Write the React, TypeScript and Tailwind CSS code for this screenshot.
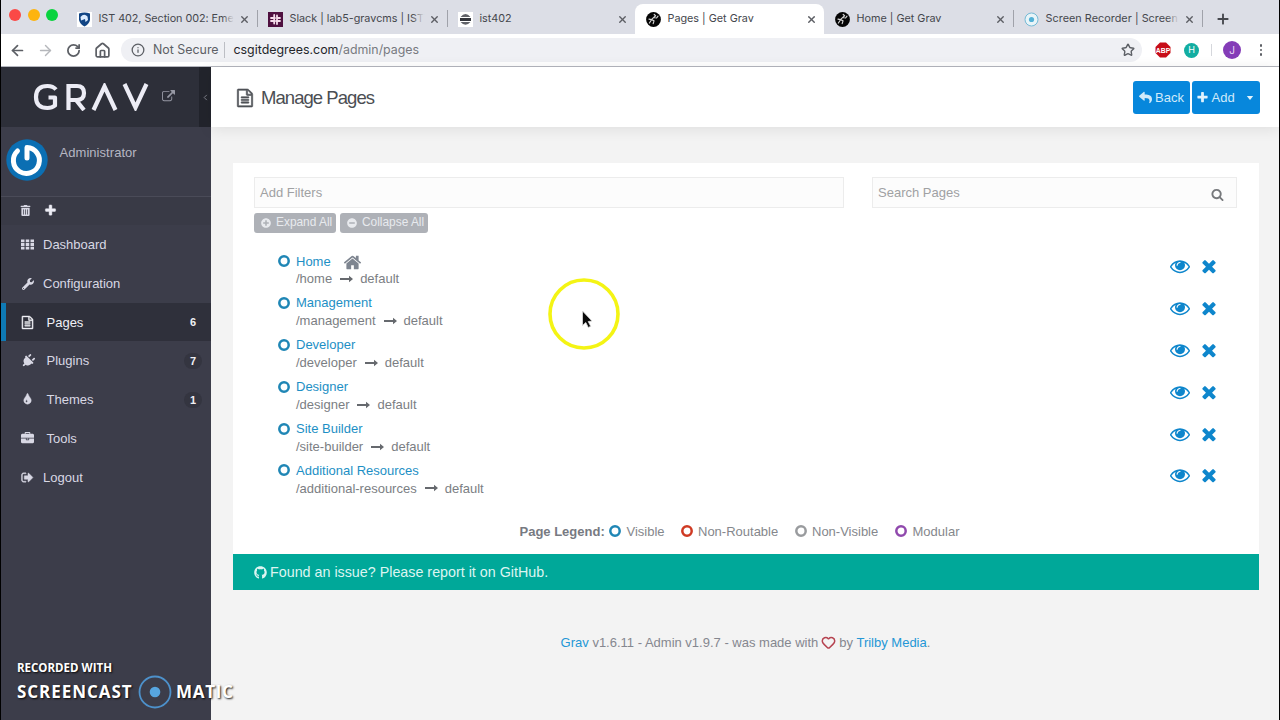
import type { ReactNode } from "react";
import { FaGithub, FaMinusCircle, FaPlug, FaPlusCircle, FaReply, FaTrashAlt, FaWrench } from "react-icons/fa";
import { ArrowLeft, ArrowRight, Heart, House, Info, Plus, RotateCw, Star, X } from "lucide-react";

const paths = {
  eye: "M1664 960q-152-236-381-353 61 104 61 225 0 185-131.5 316.5t-316.5 131.5-316.5-131.5-131.5-316.5q0-121 61-225-229 117-381 353 133 205 333.5 326.5t434.5 121.5 434.5-121.5 333.5-326.5zm-720-384q0-20-14-34t-34-14q-125 0-214.5 89.5t-89.5 214.5q0 20 14 34t34 14 34-14 14-34q0-86 61-147t147-61q20 0 34-14t14-34zm848 384q0 34-20 69-140 230-376.5 368.5t-499.5 138.5-499.5-139-376.5-368q-20-35-20-69t20-69q140-229 376.5-368t499.5-139 499.5 139 376.5 368q20 35 20 69z",
  times: "M1490 1322q0 40-28 68l-136 136q-28 28-68 28t-68-28l-294-294-294 294q-28 28-68 28t-68-28l-136-136q-28-28-28-68t28-68l294-294-294-294q-28-28-28-68t28-68l136-136q28-28 68-28t68 28l294 294 294-294q28-28 68-28t68 28l136 136q28 28 28 68t-28 68l-294 294 294 294q28 28 28 68z",
  plus: "M1600 736v192q0 40-28 68t-68 28h-416v416q0 40-28 68t-68 28h-192q-40 0-68-28t-28-68v-416h-416q-40 0-68-28t-28-68v-192q0-40 28-68t68-28h416v-416q0-40 28-68t68-28h192q40 0 68 28t28 68v416h416q40 0 68 28t28 68z",
  search: "M1216 832q0-185-131.5-316.5t-316.5-131.5-316.5 131.5-131.5 316.5 131.5 316.5 316.5 131.5 316.5-131.5 131.5-316.5zm512 832q0 52-38 90t-90 38q-54 0-90-38l-343-342q-179 124-399 124-143 0-273.5-55.5t-225-150-150-225-55.5-273.5 55.5-273.5 150-225 225-150 273.5-55.5 273.5 55.5 225 150 150 225 55.5 273.5q0 220-124 399l343 343q37 37 37 90z",
  home: "M1472 992v480q0 26-19 45t-45 19h-384v-384h-256v384h-384q-26 0-45-19t-19-45v-480q0-1 .5-3t.5-3l575-474 575 474q1 2 1 6zm223-69l-62 74q-8 9-21 11h-3q-13 0-21-7l-692-577-692 577q-12 8-24 7-13-2-21-11l-62-74q-8-10-7-23.5t11-21.5l719-599q32-26 76-26t76 26l244 204v-195q0-14 9-23t23-9h192q14 0 23 9t9 23v408l219 182q10 8 11 21.5t-7 23.5z",
  file: "M1596 380q28 28 48 76t20 88v1152q0 40-28 68t-68 28h-1344q-40 0-68-28t-28-68v-1600q0-40 28-68t68-28h896q40 0 88 20t76 48zm-444-244v376h376q-10-29-22-41l-313-313q-12-12-41-22zm384 1528v-1024h-416q-40 0-68-28t-28-68v-416h-768v1536h1280zm-1024-864q0-14 9-23t23-9h704q14 0 23 9t9 23v64q0 14-9 23t-23 9h-704q-14 0-23-9t-9-23v-64zm736 224q14 0 23 9t9 23v64q0 14-9 23t-23 9h-704q-14 0-23-9t-9-23v-64q0-14 9-23t23-9h704zm0 256q14 0 23 9t9 23v64q0 14-9 23t-23 9h-704q-14 0-23-9t-9-23v-64q0-14 9-23t23-9h704z",
  signOut: "M704 1440q0 4 1 20t.5 26.5-3 23.5-10 19.5-20.5 6.5h-320q-119 0-203.5-84.5t-84.5-203.5v-704q0-119 84.5-203.5t203.5-84.5h320q13 0 22.5 9.5t9.5 22.5q0 4 1 20t.5 26.5-3 23.5-10 19.5-20.5 6.5h-320q-66 0-113 47t-47 113v704q0 66 47 113t113 47h312l11.5 1 11.5 3 8 5.5 7 9 2 13.5zm928-544q0 26-19 45l-544 544q-19 19-45 19t-45-19-19-45v-288h-448q-26 0-45-19t-19-45v-384q0-26 19-45t45-19h448v-288q0-26 19-45t45-19 45 19l544 544q19 19 19 45z",
  external: "M1408 928v320q0 119-84.5 203.5t-203.5 84.5h-832q-119 0-203.5-84.5t-84.5-203.5v-832q0-119 84.5-203.5t203.5-84.5h704q14 0 23 9t9 23v64q0 14-9 23t-23 9h-704q-66 0-113 47t-47 113v832q0 66 47 113t113 47h832q66 0 113-47t47-113v-320q0-14 9-23t23-9h64q14 0 23 9t9 23zm384-864v512q0 26-19 45t-45 19-45-19l-176-176-652 652q-10 10-23 10t-23-10l-114-114q-10-10-10-23t10-23l652-652-176-176q-19-19-19-45t19-45 45-19h512q26 0 45 19t19 45z",
  grid: "M0 192h480v384h-480zM656 192h480v384h-480zM1312 192h480v384h-480zM0 704h480v384h-480zM656 704h480v384h-480zM1312 704h480v384h-480zM0 1216h480v384h-480zM656 1216h480v384h-480zM1312 1216h480v384h-480z",
  briefcase: "M640 256h512v-128h-512v128zm1152 640v480q0 66-47 113t-113 47h-1472q-66 0-113-47t-47-113v-480h672v160q0 26 19 45t45 19h320q26 0 45-19t19-45v-160h672zm-768 0v128h-256v-128h256zm768-480v384h-1792v-384q0-66 47-113t113-47h352v-160q0-40 28-68t68-28h576q40 0 68 28t28 68v160h352q66 0 113 47t47 113z",
  tint: "M896 1152q0-36-20-69-1-1-15.500-22.500t-25.500-38-25-44-21-50.500q-4-16-21-16t-21 16q-7 23-21 50.500t-25 44-25.500 38-15.500 22.500q-20 33-20 69 0 53 37.500 90.500t90.500 37.500 90.500-37.500 37.500-90.500zm512-128q0 212-150 362t-362 150-362-150-150-362q0-145 81-275 6-9 62.500-90.500t101-151 99.500-178 83-201.500q9-30 34-47t51-17 51.500 17 33.500 47q28 93 83 201.500t99.500 178 101 151 62.500 90.500q81 127 81 275z",
};

function Glyph({ name, size, className = "", bold }: { name: keyof typeof paths; size: number; className?: string; bold?: boolean }) {
  return (
    <svg viewBox="0 0 1792 1792" width={size} height={size} fill="currentColor" stroke="currentColor" strokeWidth={bold ? 60 : 0} className={`shrink-0 overflow-visible ${className}`}>
      <path d={paths[name]} />
    </svg>
  );
}

function Rocket() {
  return (
    <svg viewBox="0 0 15 15" className="size-[15px] shrink-0">
      <circle cx="7.500" cy="7.500" r="7.400" fill="#050505" />
      <path d="M8.200 2.500L9.600 3.800L7.800 5.400L10.600 6L12 4.200M7.800 5.400L5.400 7.600L3 7.200M5.600 7.600L8 8.800L7.200 11.600M5.400 8L3.400 11" fill="none" stroke="#d4d4d4" strokeWidth="1.200" strokeLinecap="round" strokeLinejoin="round" />
    </svg>
  );
}

function Tab({ icon, title, active, fade, line, className }: { icon: ReactNode; title: string; active?: boolean; fade?: boolean; line?: boolean; className: string }) {
  return (
    <div className={`relative flex h-[30px] shrink-0 items-center pl-[11px] pr-[7.500px] ${active ? "rounded-t-lg bg-white" : ""} ${className}`}>
      {icon}
      <span className="relative ml-[6.500px] mt-px min-w-0 flex-1 whitespace-nowrap text-[#45474d]">
        {title}
        {fade && <span className="absolute inset-y-0 right-0 w-3 bg-linear-to-r from-[#dcdee6]/0 to-[#dcdee6]" />}
      </span>
      <X size={11} strokeWidth={3} className="ml-[5px] mt-px shrink-0 text-[#5c5e64]" />
      {line && <span className="absolute right-[-1px] top-[6px] h-[17px] w-px bg-[#a0a2aa]" />}
    </div>
  );
}

function TabBar() {
  return (
    <div className="flex h-[34px] shrink-0 bg-[#dcdee6] pt-1 font-[Inter,sans-serif] text-[10.800px]">
      <div className="flex w-[65px] shrink-0 gap-[6.500px] pl-2 pt-[5px]">
        <span className="size-3 rounded-full bg-[#fb4946]" />
        <span className="size-3 rounded-full bg-[#fdb40f]" />
        <span className="size-3 rounded-full bg-[#0ad33f]" />
      </div>
      <Tab className="w-[191px] tracking-[-0.050px]" fade line title="IST 402, Section 002: Eme" icon={
        <svg viewBox="0 0 15 15" className="size-[15px] shrink-0">
          <rect width="15" height="15" fill="#fff" />
          <path d="M2 1.500Q7.500-.5 13 1.500V8Q12 12 7.500 14.500Q3 12 2 8Z" fill="#124585" />
          <path d="M3.500 5Q7 1 10.500 4.500L11 8L8.500 10L8 7L4 8.500Z" fill="#dcecff" />
        </svg>
      } />
      <Tab className="w-[190px]" fade line title="Slack | lab5-gravcms | IST" icon={
        <svg viewBox="0 0 15 15" className="size-[15px] shrink-0">
          <rect width="15" height="15" fill="#4f1040" />
          <path d="M6.200 3v2.500M6.200 7.500v4M9 3.500v4M9 9.500v2.500M3 6h4M9 6h3M3 9h3M8 9h4" stroke="#f4dcea" strokeWidth="1.800" strokeLinecap="round" />
        </svg>
      } />
      <Tab className="w-[188px]" title="ist402" icon={
        <svg viewBox="0 0 15 15" className="size-[15px] shrink-0">
          <rect width="15" height="15" fill="#fff" />
          <path d="M2.500 5Q7.500-1 12.500 5ZM2.500 10Q7.500 15.500 12.500 10Z" fill="#606268" />
          <path d="M2 6h11v3h-11z" fill="#33353b" />
        </svg>
      } />
      <Tab className="w-[189px]" active title="Pages | Get Grav" icon={<Rocket />} />
      <Tab className="w-[189px]" line title="Home | Get Grav" icon={<Rocket />} />
      <Tab className="w-[189px] tracking-[0.050px]" fade line title="Screen Recorder | Screen" icon={
        <svg viewBox="0 0 15 15" className="size-[15px] shrink-0">
          <circle cx="7.500" cy="7.500" r="6.500" fill="#e8f4f8" stroke="#75bad6" />
          <circle cx="7.500" cy="7.500" r="2.600" fill="#53b1d6" />
        </svg>
      } />
      <Plus size={16} strokeWidth={2.800} className="ml-[13px] mt-[7px] text-[#45474d]" />
    </div>
  );
}

function Toolbar() {
  return (
    <div className="flex h-[33px] shrink-0 items-center border-b border-[#b4b6be] bg-white font-[Inter,sans-serif] text-[13px] text-[#5c5f65]">
      <ArrowLeft size={17} strokeWidth={2.400} className="ml-[8px]" />
      <ArrowRight size={17} strokeWidth={2} className="ml-[11px] text-[#b5b7bb]" />
      <RotateCw size={15} strokeWidth={2.800} className="ml-[12px]" />
      <House size={17} strokeWidth={2.400} className="ml-[12.500px]" />
      <div className="ml-[10.500px] flex h-6 w-[1021px] items-center rounded-full bg-[#eff0f4] pl-[10px] pr-[7px]">
        <Info size={14} strokeWidth={2.200} />
        <span className="ml-2 w-[66px] whitespace-nowrap text-[12.400px]">Not Secure</span>
        <span className="ml-[5px] mr-[8.500px] h-4 w-px bg-[#bcbec4]" />
        <span className="text-[12.400px] text-[#777a80]"><span className="text-[#232529]">csgitdegrees.com</span>/admin/pages</span>
        <Star size={14} strokeWidth={2.400} className="ml-auto" />
      </div>
      <svg viewBox="0 0 16 16" className="ml-[13px] size-4">
        <path d="M5 .5h6L15.500 5v6L11 15.500H5L.5 11V5Z" fill="#c70d18" />
        <text x="8" y="10.800" textAnchor="middle" fill="#fff" fontFamily="Liberation Sans, sans-serif" fontWeight="bold" fontSize="6.800">ABP</text>
      </svg>
      <span className="ml-[13px] flex size-[15px] items-center justify-center rounded-full bg-[#12ada1] text-[9px] text-white">H</span>
      <span className="ml-3 h-3 w-px bg-[#d5d7dc]" />
      <span className="ml-[11px] flex size-[18px] items-center justify-center rounded-full bg-[#843cb7] text-[10px] text-[#ead9f5]">J</span>
      <span className="ml-[18.500px] flex flex-col gap-[2px]">
        <span className="size-[2.500px] rounded-full bg-[#5c5f65]" />
        <span className="size-[2.500px] rounded-full bg-[#5c5f65]" />
        <span className="size-[2.500px] rounded-full bg-[#5c5f65]" />
      </span>
    </div>
  );
}

function NavItem({ icon, label, count, active, tight }: { icon: ReactNode; label: string; count?: string; active?: boolean; tight?: boolean }) {
  return (
    <div className={`flex h-[38.750px] items-center border-l-[5px] pr-[9px] pt-px ${active ? "border-[#0f7ab5] bg-[#2f303b] text-[#f0f0f6]" : "border-transparent"}`}>
      <span className="flex w-[43px] shrink-0 justify-center">{icon}</span>
      <span className={tight ? "-ml-[6px]" : "-ml-[2.500px]"}>{label}</span>
      {count && <span className={`ml-auto flex h-4 w-[18px] items-center justify-center rounded-lg text-[11px] font-bold text-[#f0f0f5] ${active ? "" : "bg-[#343540]"}`}>{count}</span>}
    </div>
  );
}

function Sidebar() {
  return (
    <aside className="flex w-[210px] shrink-0 flex-col bg-[#3c3d4a] text-[13px] text-[#d8d8e4]">
      <div className="flex h-[60px] shrink-0 bg-[#2d2f39]">
        <svg viewBox="0 0 116 28" className="ml-[32px] mt-4 h-7 w-[116px]" fill="none" stroke="#ececf5" strokeWidth="4.200">
          <path d="M23 6.500Q20 3 14.500 3Q3 3 3 14T14.500 25Q19 25 22 22.500V14.500H15.500" strokeLinejoin="round" />
          <path d="M35.500 27V3H44Q51 3 51 10T44 17H35.500M43 17L51 27" />
          <path d="M60.500 27L71.500 3.500L82.500 27" />
          <path d="M91.500 1L102.500 24.500L113.500 1" />
        </svg>
        <Glyph name="external" size={13} className="ml-[13px] mt-[23px] text-[#9698a4]" />
        <span className="ml-auto flex w-3 items-center justify-center bg-[#22242c] text-[#8b8d98]">
          <svg viewBox="0 0 5 8" className="h-[7px] w-[5px]" fill="none" stroke="currentColor"><path d="M4 1L1 4L4 7" /></svg>
        </span>
      </div>
      <div className="flex h-[70px] shrink-0 border-b border-[#4a4b58] pl-[5px] pt-[12px]">
        <svg viewBox="0 0 42 42" className="size-[42px]">
          <circle cx="21" cy="21" r="20.700" fill="#0b6fb3" />
          <path d="M11.500 12A13 13 0 1 0 21 8.500V19" fill="none" stroke="#fff" strokeWidth="5" strokeLinecap="round" strokeLinejoin="round" />
        </svg>
        <span className="ml-[11.500px] mt-[4px] h-5 text-[13px] leading-5 tracking-[0.050px] text-[#b6b7c3]">Administrator</span>
      </div>
      <div className="flex h-[28px] shrink-0 items-center gap-[13px] bg-[#393a46] pb-[2px] pl-[19px]">
        <FaTrashAlt size={11} />
        <Glyph name="plus" size={13} bold className="text-[#ededf5]" />
      </div>
      <nav className="flex flex-col">
        <NavItem tight icon={<Glyph name="grid" size={13} />} label="Dashboard" />
        <NavItem tight icon={<FaWrench size={12} />} label="Configuration" />
        <NavItem active icon={<Glyph name="file" size={13} bold />} label="Pages" count="6" />
        <NavItem icon={<FaPlug size={14} className="rotate-45" />} label="Plugins" count="7" />
        <NavItem icon={<Glyph name="tint" size={13} bold />} label="Themes" count="1" />
        <NavItem icon={<Glyph name="briefcase" size={13} />} label="Tools" />
        <NavItem tight icon={<Glyph name="signOut" size={13} bold />} label="Logout" />
      </nav>
    </aside>
  );
}

function Ring({ className }: { className: string }) {
  return (
    <svg viewBox="0 0 12 12" className={`size-3 shrink-0 ${className}`}>
      <circle cx="6" cy="6" r="4.700" fill="none" stroke="currentColor" strokeWidth="2.500" />
    </svg>
  );
}

function PageRow({ name, slug, home }: { name: string; slug: string; home?: boolean }) {
  return (
    <div className="flex h-[41.900px] pl-[44.500px] pr-[40.500px]">
      <Ring className="mt-[3px] text-[#1f86b5]" />
      <div className="ml-[6.500px] flex flex-col">
        <span className="flex h-[18.500px] items-center text-[13px] text-[#1d8fc5]">
          {name}
          {home && <Glyph name="home" size={19} className="ml-[12px] mt-[2px] text-[#7e8590]" />}
        </span>
        <span className="flex h-[17px] items-center text-[13px] text-[#7b7e83]">
          {slug}
          <svg viewBox="0 0 13 8" className="ml-2 mr-[7px] h-2 w-[13px]"><path d="M0 3h9V.8l4 3.200-4 3.200V5H0Z" fill="#66696e" /></svg>
          default
        </span>
      </div>
      <Glyph name="eye" size={20} className="ml-auto mt-[4px] text-[#0e86cc]" />
      <Glyph name="times" size={20} className="ml-[8.500px] mt-[4px] text-[#0e86cc]" />
    </div>
  );
}

const pages = [
  { name: "Home", slug: "/home", home: true },
  { name: "Management", slug: "/management" },
  { name: "Developer", slug: "/developer" },
  { name: "Designer", slug: "/designer" },
  { name: "Site Builder", slug: "/site-builder" },
  { name: "Additional Resources", slug: "/additional-resources" },
];

const legend = [
  { label: "Visible", ring: "text-[#1f86b5]", width: "w-[71.500px]" },
  { label: "Non-Routable", ring: "text-[#cf3a23]", width: "w-[114px]" },
  { label: "Non-Visible", ring: "text-[#999b9e]", width: "w-[100.500px]" },
  { label: "Modular", ring: "text-[#9049ad]", width: "w-[65px]" },
];

function PagesPanel() {
  return (
    <section className="ml-[22px] mr-[20px] mt-[36px] flex h-[427px] shrink-0 flex-col bg-white text-[13px]">
      <div className="flex gap-7 pl-[21px] pr-[22px] pt-[14px] text-[#a0a1a3]">
        <div className="flex h-[31px] w-[590px] items-center border border-[#ececec] bg-[#fcfcfc] pl-[5px]">Add Filters</div>
        <div className="flex h-[31px] flex-1 items-center border border-[#ececec] bg-[#fcfcfc] pl-[5px] pr-[12px]">
          Search Pages
          <Glyph name="search" size={13} className="ml-auto mt-[3px] text-[#77797c]" />
        </div>
      </div>
      <div className="mt-[4.500px] flex gap-1 pl-[21px] text-[11.900px] text-[#e8eaee]">
        <span className="flex h-[20.500px] w-[82px] items-center rounded-[3px] bg-[#aeb1b7] pl-[7px]"><FaPlusCircle size={10} /><span className="ml-[5px] whitespace-nowrap">Expand All</span></span>
        <span className="flex h-[20.500px] w-[88px] items-center rounded-[3px] bg-[#aeb1b7] pl-[7px]"><FaMinusCircle size={10} /><span className="ml-[5px] whitespace-nowrap">Collapse All</span></span>
      </div>
      <div className="mt-[19px] flex flex-col">
        {pages.map((p) => <PageRow key={p.slug} {...p} />)}
      </div>
      <div className="mt-[18px] flex h-5 items-center pl-[286.500px] text-[#85878c]">
        <b className="w-[89.500px] whitespace-nowrap text-[#777a82]">Page Legend:</b>
        {legend.map((l) => (
          <span key={l.label} className={`flex items-center gap-[5.500px] whitespace-nowrap ${l.width}`}>
            <Ring className={l.ring} />{l.label}
          </span>
        ))}
      </div>
      <div className="mt-auto flex h-9 items-center bg-[#00a899] pl-[21px] pt-px text-[14.300px] text-[#dcf5f1]">
        <FaGithub size={13} />
        <span className="ml-[3px]">Found an issue? Please report it on GitHub.</span>
      </div>
    </section>
  );
}

function Main() {
  return (
    <main className="flex min-w-0 flex-1 flex-col bg-[#f3f3f3]">
      <header className="flex h-[60px] shrink-0 items-center bg-white pl-[25px] pr-[19px] shadow-[0_2px_14px_rgba(0,0,0,0.09)]">
        <Glyph name="file" size={18} bold className="mt-px text-[#4e5156]" />
        <h1 className="ml-[7px] mt-[2px] text-[18.500px] leading-6 tracking-[-0.950px] text-[#4b4e53]">Manage Pages</h1>
        <div className="ml-auto flex gap-[2px] text-[13px] text-[#d0eafa]">
          <button className="flex h-[33px] w-[57px] items-center rounded-[3px] bg-[#0787dc] pl-[6px]"><FaReply size={13} /><span className="ml-[3px] mt-px">Back</span></button>
          <button className="flex h-[33px] w-[68px] items-center rounded-[3px] bg-[#0787dc] pl-[4px]">
            <Glyph name="plus" size={13} className="text-[#e1f2fc]" /><span className="ml-[2.500px] mt-px">Add</span>
            <svg viewBox="0 0 8 5" className="ml-[11px] mt-px h-[4px] w-[8px]"><path d="M0 0h8L4 5Z" fill="#e1f2fc" /></svg>
          </button>
        </div>
      </header>
      <PagesPanel />
      <footer className="mt-[42px] flex items-center justify-center pl-px text-[13px] leading-[22px] text-[#85878f]">
        <span>
          <span className="text-[#2497d6]">Grav</span> v1.6.11 - Admin v1.9.7 - was made with
        </span>
        <Heart size={15} strokeWidth={2.400} className="mx-[3px] -mt-px text-[#b64350]" />
        <span>by <span className="text-[#2497d6]">Trilby Media</span>.</span>
      </footer>
    </main>
  );
}

function Recorder() {
  return (
    <div className="absolute left-4 top-[660px] font-['Open_Sans',sans-serif] font-bold text-white [text-shadow:1px_1px_2px_rgba(0,0,0,0.9)]">
      <div className="h-[15px] text-[11.500px] leading-[15px]">RECORDED WITH</div>
      <div className="flex h-[33px] items-center text-[17px]">
        <span className="w-[121px] whitespace-nowrap tracking-[0.950px]">SCREENCAST</span>
        <svg viewBox="0 0 34 34" className="size-[34px] shrink-0"><circle cx="17" cy="17" r="15.500" fill="none" stroke="#4d91cb" strokeWidth="1.800" /><circle cx="17" cy="17" r="5.300" fill="#57a5df" /></svg>
        <span className="ml-1 tracking-[0.700px]">MATIC</span>
      </div>
    </div>
  );
}

export default function App() {
  return (
    <div className="relative flex h-[720px] w-[1280px] flex-col overflow-hidden border-x border-black bg-[#f3f3f3] font-['Liberation_Sans',sans-serif]">
      <TabBar />
      <Toolbar />
      <div className="flex min-h-0 flex-1">
        <Sidebar />
        <Main />
      </div>
      <Recorder />
      <svg viewBox="0 0 74 74" className="absolute left-[546px] top-[277px] size-[74px]">
        <circle cx="37" cy="37" r="34" fill="none" stroke="#f4f414" strokeWidth="3.600" />
        <path d="M35.500 34V48.500L38.800 45.500L41.300 50.500L43.700 49.300L41.200 44.500L45 44Z" fill="#0a0a0a" stroke="#ddd" strokeWidth=".8" />
      </svg>
    </div>
  );
}
